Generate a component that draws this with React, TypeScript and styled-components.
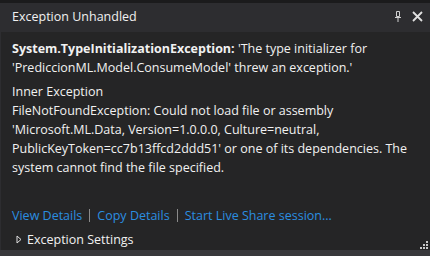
import * as React from 'react';
import styled, { createGlobalStyle } from 'styled-components';

const Global = createGlobalStyle`
    html, body {
        margin: 0;
        padding: 0;
        background: #1e1e1e;
    }
    body {
        font-family: 'Open Sans', 'Noto Sans', sans-serif;
    }
`;

const Popup = styled.div`
    width: 430px;
    height: 256px;
    box-sizing: border-box;
    padding-top: 3px;
    background: #1b1b1c;
    display: flex;
    flex-direction: column;
`;

const Header = styled.div`
    height: 29px;
    box-sizing: border-box;
    background: #2d2d30;
    display: flex;
    align-items: center;
    padding: 0 7px 2px 12px;
    color: #f1f1f1;
    font-size: 12.5px;
`;

const Title = styled.div`
    flex: 1;
`;

const HeaderIcons = styled.div`
    display: flex;
    align-items: center;
    gap: 10px;
`;

const Body = styled.div`
    flex: 1;
    background: #252526;
    border-left: 1px solid #2d2d30;
    padding: 7px 12px 0 11px;
    display: flex;
    flex-direction: column;
    color: #f1f1f1;
    font-size: 12.5px;
    line-height: 19px;
    position: relative;
`;

const Para = styled.div<{ $gap?: number }>`
    white-space: nowrap;
    margin-bottom: ${p => p.$gap ?? 0}px;
`;

const Bold = styled.span`
    font-weight: 700;
`;

const Links = styled.div`
    margin-top: auto;
    display: flex;
    align-items: center;
    color: #2b8ee0;
    margin-bottom: 5px;
`;

const Sep = styled.span`
    width: 1px;
    height: 13px;
    background: #8a8a8a;
    margin: 0 7px;
`;

const Settings = styled.div`
    display: flex;
    align-items: center;
    gap: 5px;
    padding-left: 4px;
    margin-bottom: 1px;
`;

const Footer = styled.div`
    height: 6px;
    background: #38383b;
`;

const Grip = styled.svg`
    position: absolute;
    right: 1px;
    bottom: 0;
`;

export default function App() {
    return (
        <Popup>
            <Global />
            <Header>
                <Title>Exception Unhandled</Title>
                <HeaderIcons>
                    <svg width="8" height="13" viewBox="0 0 8 13">
                        <path d="M2.5 1.5h3v5h-3z" fill="none" stroke="#d0d0d0" strokeWidth="1" />
                        <path d="M1 7.5h6M4 8v4" stroke="#d0d0d0" strokeWidth="1" />
                    </svg>
                    <svg width="11" height="11" viewBox="0 0 11 11">
                        <path d="M1 1l9 9M10 1l-9 9" stroke="#e0e0e0" strokeWidth="1.8" />
                    </svg>
                </HeaderIcons>
            </Header>
            <Body>
                <Para $gap={5}>
                    <Bold>System.TypeInitializationException:</Bold> 'The type initializer for
                    <br />
                    'PrediccionML.Model.ConsumeModel' threw an exception.'
                </Para>
                <Para>
                    Inner Exception
                    <br />
                    FileNotFoundException: Could not load file or assembly
                    <br />
                    'Microsoft.ML.Data, Version=1.0.0.0, Culture=neutral,
                    <br />
                    PublicKeyToken=cc7b13ffcd2ddd51' or one of its dependencies. The
                    <br />
                    system cannot find the file specified.
                </Para>
                <Links>
                    <span>View Details</span>
                    <Sep />
                    <span>Copy Details</span>
                    <Sep />
                    <span>Start Live Share session...</span>
                </Links>
                <Settings>
                    <svg width="6" height="9" viewBox="0 0 6 9">
                        <path d="M1 1l4 3.5L1 8z" fill="none" stroke="#e0e0e0" strokeWidth="1" />
                    </svg>
                    <span>Exception Settings</span>
                </Settings>
                <Grip width="10" height="9" viewBox="0 0 10 9">
                    <rect x="7" y="0" width="2" height="2" fill="#c8c8c8" />
                    <rect x="4" y="3" width="2" height="2" fill="#c8c8c8" />
                    <rect x="7" y="3" width="2" height="2" fill="#c8c8c8" />
                    <rect x="1" y="6" width="2" height="2" fill="#c8c8c8" />
                    <rect x="4" y="6" width="2" height="2" fill="#c8c8c8" />
                    <rect x="7" y="6" width="2" height="2" fill="#c8c8c8" />
                </Grip>
            </Body>
            <Footer />
        </Popup>
    );
}
